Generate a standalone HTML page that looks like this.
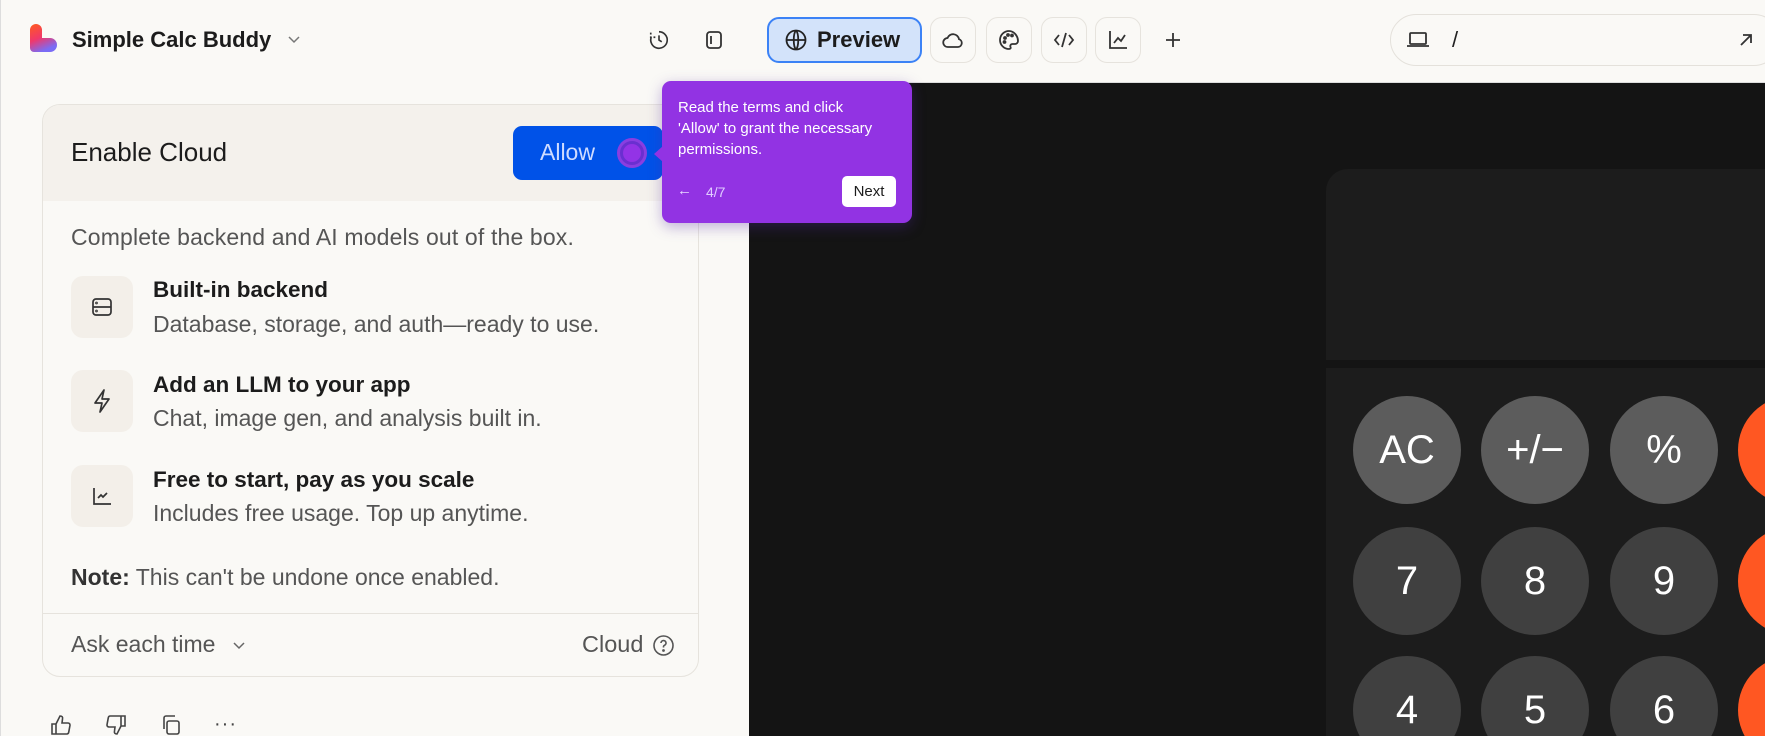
<!DOCTYPE html>
<html><head><meta charset="utf-8"><style>
*{margin:0;padding:0;box-sizing:border-box}
html,body{width:1765px;height:736px;overflow:hidden}
body{background:#faf9f6;font-family:"Liberation Sans",sans-serif;position:relative;color:#1c1c1c}
.a{position:absolute}
.ib{position:absolute;top:17px;width:46px;height:46px;border:1px solid #e6e3dd;border-radius:12px;display:flex;align-items:center;justify-content:center}
svg{display:block}
.box{position:absolute;left:71px;width:62px;height:62px;border-radius:12px;background:#f3efe9;display:flex;align-items:center;justify-content:center}
.t{position:absolute;left:153px;font-size:22.5px;font-weight:bold;color:#1c1c1c}
.d{position:absolute;left:153px;font-size:23px;color:#555}
.btn{position:absolute;width:108px;height:108px;border-radius:50%;display:flex;align-items:center;justify-content:center;color:#fff;font-size:40px}
</style></head><body>
<div class="a" style="left:0;top:0;width:1px;height:736px;background:#ddd"></div>
<svg class="a" style="left:28px;top:24px" width="30" height="32" viewBox="0 0 30 32"><defs><linearGradient id="g" x1="0" y1="0" x2="0.4" y2="1"><stop offset="0" stop-color="#ff5a1f"/><stop offset="0.55" stop-color="#f0386b"/><stop offset="1" stop-color="#7a6cf5"/></linearGradient></defs><path d="M2 6a6 6 0 0 1 12 0v8h8a7 7 0 0 1 0 14H6a4 4 0 0 1-4-4z" fill="url(#g)"/></svg>
<div class="a" style="left:72px;top:27px;font-size:22px;font-weight:bold;color:#1c1c1c">Simple Calc Buddy</div>
<svg class="a" style="left:287px;top:35px" width="14" height="9"><path d="M2 2l5 5 5-5" stroke="#777" stroke-width="1.5" fill="none"/></svg>
<svg class="a" style="left:648px;top:29px" width="22" height="22" viewBox="0 0 24 24" fill="none" stroke="#333" stroke-width="1.8"><path d="M12 3a9 9 0 1 1-8.5 6" /><path d="M12 7v5l3 2"/><path d="M3 4v5h5" stroke-dasharray="2 2"/></svg>
<svg class="a" style="left:704px;top:30px" width="20" height="20" viewBox="0 0 20 20" fill="none" stroke="#333" stroke-width="1.8"><rect x="3" y="2" width="14" height="16" rx="3"/><path d="M7 6v8"/></svg>
<div class="a" style="left:767px;top:17px;width:155px;height:46px;border:2px solid #3b82f6;border-radius:12px;background:#d3e3fa;display:flex;align-items:center;padding-left:15px">
<svg width="24" height="24" viewBox="0 0 24 24" fill="none" stroke="#222" stroke-width="1.8"><circle cx="12" cy="12" r="9.5"/><path d="M2.5 12h19M12 2.5c3 3 3 16 0 19M12 2.5c-3 3-3 16 0 19"/></svg>
<span style="font-size:22px;font-weight:bold;margin-left:9px;color:#1c1c1c">Preview</span></div>
<div class="ib" style="left:930px"><svg width="24" height="22" viewBox="0 0 24 22" fill="none" stroke="#333" stroke-width="1.8"><path d="M7 18h10a4 4 0 0 0 1-7.8A6 6 0 0 0 6.5 9 4.5 4.5 0 0 0 7 18z"/></svg></div>
<div class="ib" style="left:986px"><svg width="24" height="24" viewBox="0 0 24 24" fill="none" stroke="#333" stroke-width="1.8"><path d="M12 3a9 9 0 0 0 0 18c1.5 0 2-1 1.5-2-.6-1.4.2-3 2-3H18a3 3 0 0 0 3-3c0-5-4-10-9-10z"/><circle cx="8" cy="10" r="1" fill="#333"/><circle cx="11" cy="7" r="1" fill="#333"/><circle cx="15" cy="7.5" r="1" fill="#333"/><circle cx="7.5" cy="14" r="1" fill="#333"/></svg></div>
<div class="ib" style="left:1041px"><svg width="24" height="24" viewBox="0 0 24 24" fill="none" stroke="#333" stroke-width="1.8"><path d="M7 7l-4 5 4 5M17 7l4 5-4 5M14 5l-4 14"/></svg></div>
<div class="ib" style="left:1095px"><svg width="22" height="22" viewBox="0 0 22 22" fill="none" stroke="#333" stroke-width="1.8"><path d="M3 2v17h17"/><path d="M7 14l4-5 3 3 4-6"/></svg></div>
<svg class="a" style="left:1165px;top:32px" width="16" height="16"><path d="M8 1v14M1 8h14" stroke="#333" stroke-width="1.8"/></svg>
<div class="a" style="left:1390px;top:14px;width:390px;height:52px;border:1px solid #e4e1db;border-radius:26px"></div>
<svg class="a" style="left:1406px;top:30px" width="24" height="20" viewBox="0 0 24 20" fill="none" stroke="#333" stroke-width="1.8"><rect x="4" y="3" width="16" height="11" rx="1"/><path d="M1 16h22"/></svg>
<div class="a" style="left:1452px;top:27px;font-size:22px;color:#222">/</div>
<svg class="a" style="left:1738px;top:32px" width="16" height="16" fill="none" stroke="#333" stroke-width="1.8"><path d="M3 13L13 3M5 3h8v8"/></svg>
<div class="a" style="left:749px;top:82px;width:1016px;height:1px;background:#ddd"></div>
<div class="a" style="left:749px;top:83px;width:1016px;height:653px;background:#141414;overflow:hidden">
<div class="a" style="left:577px;top:86px;width:500px;height:700px;background:#1c1c1c;border-radius:22px 0 0 0"></div>
<div class="a" style="left:577px;top:277px;width:500px;height:8px;background:#141414"></div>
<div class="btn" style="left:604px;top:313px;background:#5c5c5c">AC</div>
<div class="btn" style="left:732px;top:313px;background:#5c5c5c">+/−</div>
<div class="btn" style="left:861px;top:313px;background:#5c5c5c">%</div>
<div class="btn" style="left:989px;top:313px;background:#ff5722"></div>
<div class="btn" style="left:604px;top:444px;background:#404040">7</div>
<div class="btn" style="left:732px;top:444px;background:#404040">8</div>
<div class="btn" style="left:861px;top:444px;background:#404040">9</div>
<div class="btn" style="left:989px;top:444px;background:#ff5722"></div>
<div class="btn" style="left:604px;top:573px;background:#404040">4</div>
<div class="btn" style="left:732px;top:573px;background:#404040">5</div>
<div class="btn" style="left:861px;top:573px;background:#404040">6</div>
<div class="btn" style="left:989px;top:573px;background:#ff5722"></div>
</div>
<div class="a" style="left:42px;top:104px;width:657px;height:573px;border:1px solid #e6e3dd;border-radius:18px;background:#faf9f6;overflow:hidden">
<div style="height:96px;background:#f4f1ec"></div>
<div class="a" style="left:0;top:508px;width:100%;height:1px;background:#e6e3dd"></div>
</div>
<div class="a" style="left:71px;top:137px;font-size:26px;color:#1c1c1c">Enable Cloud</div>
<div class="a" style="left:513px;top:126px;width:150px;height:54px;background:#0052e8;border-radius:9px"></div>
<div class="a" style="left:540px;top:139px;font-size:23px;color:#cfdcff">Allow</div>
<div class="a" style="left:617px;top:138px;width:30px;height:30px;border-radius:50%;border:3px solid #8a3ee0;background:#6a2fd0"></div>
<div class="a" style="left:623px;top:144px;width:18px;height:18px;border-radius:50%;background:#9333e6"></div>
<div class="a" style="left:662px;top:81px;width:250px;height:142px;background:#9233e3;border-radius:9px;box-shadow:0 4px 14px rgba(80,40,160,.35)"></div>
<div class="a" style="left:654px;top:146px;width:0;height:0;border-top:8px solid transparent;border-bottom:8px solid transparent;border-right:9px solid #9233e3"></div>
<div class="a" style="left:678px;top:97px;width:195px;font-size:15px;line-height:21px;color:#fff">Read the terms and click 'Allow' to grant the necessary permissions.</div>
<div class="a" style="left:677px;top:182px;font-size:15px;color:#e8d8ff">←</div>
<div class="a" style="left:706px;top:184px;font-size:14px;color:#e0ccff">4/7</div>
<div class="a" style="left:842px;top:176px;width:54px;height:31px;background:#fff;border-radius:5px;font-size:15px;display:flex;align-items:center;justify-content:center;color:#1c1c1c">Next</div>
<div class="a" style="left:71px;top:224px;font-size:23px;letter-spacing:0.15px;color:#555">Complete backend and AI models out of the box.</div>
<div class="box" style="top:276px"><svg width="22" height="20" viewBox="0 0 22 20" fill="none" stroke="#333" stroke-width="1.7"><rect x="2" y="2" width="18" height="16" rx="3"/><path d="M2 10h18"/><circle cx="5.5" cy="6" r=".5"/><circle cx="5.5" cy="14" r=".5"/></svg></div>
<div class="t" style="top:277px">Built-in backend</div>
<div class="d" style="top:311px">Database, storage, and auth—ready to use.</div>
<div class="box" style="top:370px"><svg width="22" height="26" viewBox="0 0 22 26" fill="none" stroke="#333" stroke-width="1.7" stroke-linejoin="round"><path d="M13 2L4 15h7l-2 9 9-13h-7z"/></svg></div>
<div class="t" style="top:372px">Add an LLM to your app</div>
<div class="d" style="top:405px">Chat, image gen, and analysis built in.</div>
<div class="box" style="top:465px"><svg width="22" height="22" viewBox="0 0 22 22" fill="none" stroke="#333" stroke-width="1.7"><path d="M3 3v16h17"/><path d="M7 13l3-3 2 2 4-4"/></svg></div>
<div class="t" style="top:467px">Free to start, pay as you scale</div>
<div class="d" style="top:500px">Includes free usage. Top up anytime.</div>
<div class="a" style="left:71px;top:564px;font-size:23px;color:#555"><b style="color:#333">Note:</b> This can't be undone once enabled.</div>
<div class="a" style="left:71px;top:631px;font-size:23px;color:#555">Ask each time</div>
<svg class="a" style="left:232px;top:641px" width="14" height="9"><path d="M2 2l5 5 5-5" stroke="#666" stroke-width="1.5" fill="none"/></svg>
<div class="a" style="left:582px;top:631px;font-size:23.5px;color:#555">Cloud</div>
<svg class="a" style="left:652px;top:634px" width="23" height="23" viewBox="0 0 23 23" fill="none" stroke="#555" stroke-width="1.6"><circle cx="11.5" cy="11.5" r="9.5"/><path d="M9 9a2.5 2.5 0 1 1 3.5 2.3c-.7.3-1 .8-1 1.5v.7"/><circle cx="11.5" cy="16.5" r=".6" fill="#555"/></svg>
<svg class="a" style="left:50px;top:714px" width="22" height="22" viewBox="0 0 22 22" fill="none" stroke="#444" stroke-width="1.6"><path d="M6 10v10H2V10zM6 10l4-8c2 0 3 1 2.5 3L12 9h6a2 2 0 0 1 2 2.3l-1.3 7A2 2 0 0 1 16.7 20H6"/></svg>
<svg class="a" style="left:105px;top:714px" width="22" height="22" viewBox="0 0 22 22" fill="none" stroke="#444" stroke-width="1.6"><path d="M16 12V2h4v10zM16 12l-4 8c-2 0-3-1-2.5-3L10 13H4a2 2 0 0 1-2-2.3l1.3-7A2 2 0 0 1 5.3 2H16"/></svg>
<svg class="a" style="left:160px;top:714px" width="22" height="22" viewBox="0 0 22 22" fill="none" stroke="#444" stroke-width="1.6"><rect x="7" y="7" width="12" height="13" rx="2"/><path d="M4 15V4a2 2 0 0 1 2-2h9"/></svg>
<div class="a" style="left:214px;top:713px;height:22px;font-size:20px;line-height:22px;color:#444;letter-spacing:1px">···</div>
</body></html>
